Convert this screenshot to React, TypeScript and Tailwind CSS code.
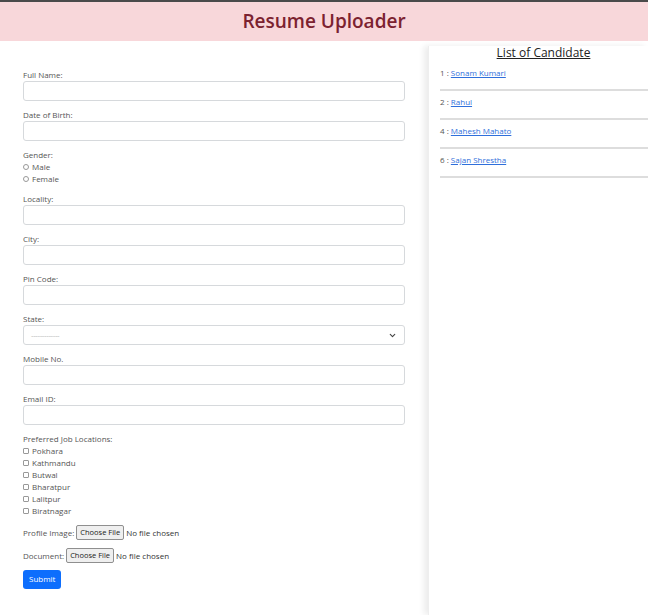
import { ChevronDown } from "lucide-react";

const candidates = [
  { id: 1, name: "Sonam Kumari" },
  { id: 2, name: "Rahul" },
  { id: 4, name: "Mahesh Mahato" },
  { id: 6, name: "Sajan Shrestha" },
];

const locations = ["Pokhara", "Kathmandu", "Butwal", "Bharatpur", "Lalitpur", "Biratnagar"];

function Field({ label }: { label: string }) {
  return (
    <div className="mb-[9px]">
      <label className="block h-[10px] leading-[10px] text-[8px] text-[#555] mb-[1px]">{label}</label>
      <div className="h-[20px] w-full rounded-[3px] border border-[#d6d9dc] bg-white" />
    </div>
  );
}

function FileRow({ label, last }: { label: string; last?: boolean }) {
  return (
    <div className={`flex items-center h-[15px] text-[8px] text-[#555] ${last ? "mb-[1px]" : "mb-[8px]"}`}>
      <span>{label}:</span>
      <span className="ml-[2px] px-[3px] h-[15px] leading-[13px] border border-[#8f8f8f] rounded-[2px] bg-[#efefef] text-[#222] text-[7.5px]">
        Choose File
      </span>
      <span className="ml-[2px] text-[#333]">No file chosen</span>
    </div>
  );
}

export default function App() {
  return (
    <div className="min-h-[615px] bg-white font-['Open_Sans',sans-serif]">
      <header className="border-t-2 border-[#4a4a4a] bg-[#f8d7da] h-[41px] flex items-center justify-center">
        <h1 className="text-[19px] font-semibold text-[#7c2230] leading-none">Resume Uploader</h1>
      </header>

      <div className="flex">
        <div className="w-[428px] px-[23px] pt-[29px] pb-6">
          <Field label="Full Name:" />
          <Field label="Date of Birth:" />

          <div className="mb-[9px] text-[8px] text-[#555]">
            <div className="h-[10px] leading-[10px] mb-[1px]">Gender:</div>
            {["Male", "Female"].map((g) => (
              <div key={g} className="flex items-center h-[12px]">
                <span className="w-[6px] h-[6px] rounded-full border border-[#999] mr-[3px]" />
                {g}
              </div>
            ))}
          </div>

          <Field label="Locality:" />
          <Field label="City:" />
          <Field label="Pin Code:" />

          <div className="mb-[9px]">
            <label className="block h-[10px] leading-[10px] text-[8px] text-[#555] mb-[1px]">State:</label>
            <div className="h-[20px] w-full rounded-[3px] border border-[#d6d9dc] bg-white flex items-center justify-between px-[7px]">
              <span className="text-[8px] text-[#bbb] tracking-tighter">-------------</span>
              <ChevronDown className="w-[9px] h-[9px] text-[#444]" strokeWidth={3} />
            </div>
          </div>

          <Field label="Mobile No." />
          <Field label="Email ID:" />

          <div className="mb-[8px] text-[8px] text-[#555]">
            <div className="h-[10px] leading-[10px] mb-[1px]">Preferred Job Locations:</div>
            {locations.map((l) => (
              <div key={l} className="flex items-center h-[12px]">
                <span className="w-[6px] h-[6px] border border-[#999] rounded-[1px] mr-[3px]" />
                {l}
              </div>
            ))}
          </div>

          <FileRow label="Profile Image" />
          <FileRow label="Document" last />

          <button className="h-[19px] px-[6px] rounded-[3px] bg-[#0d6efd] text-white text-[8px]">
            Submit
          </button>
        </div>

        <div className="flex-1 mt-[5px] min-h-[569px] bg-white shadow-[-4px_0_6px_rgba(0,0,0,0.08)] border-l border-[#eee]">
          <h2 className="text-center text-[12px] font-medium text-[#222] underline leading-none pt-[1px] pl-[10px]">
            List of Candidate
          </h2>
          <div className="pl-[11px] pt-[3px]">
            {candidates.map((c) => (
              <div key={c.id} className="border-b-2 border-[#ddd] h-[29px] flex items-start pt-[5px] text-[8px]">
                <span className="text-[#555]">{c.id} :&nbsp;</span>
                <a href="#" className="text-[#2f6fdb] underline">
                  {c.name}
                </a>
              </div>
            ))}
          </div>
        </div>
      </div>
    </div>
  );
}
